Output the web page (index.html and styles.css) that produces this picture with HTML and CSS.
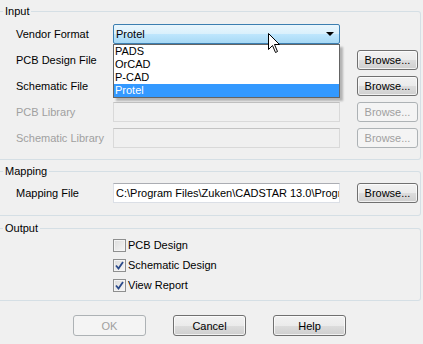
FILE: index.html
```html
<!DOCTYPE html>
<html>
<head>
	<meta charset="utf-8">
	<title>Import Settings</title>
	<link rel="stylesheet" href="styles.css">
</head>
<body>
	<div class="dialog">
		<fieldset class="group group-input">
			<legend>Input</legend>
			<div class="rows">
				<div class="row">
					<label>Vendor Format</label>
					<div class="combo">
						<span class="combo-text">Protel</span>
						<span class="combo-arrow"></span>
						<!-- open drop-down list -->
						<ul class="droplist">
							<li>PADS</li>
							<li>OrCAD</li>
							<li>P-CAD</li>
							<li class="selected">Protel</li>
						</ul>
					</div>
				</div>
				<div class="row">
					<label>PCB Design File</label>
					<div class="field"></div>
					<button type="button" class="btn">Browse...</button>
				</div>
				<div class="row">
					<label>Schematic File</label>
					<div class="field"></div>
					<button type="button" class="btn">Browse...</button>
				</div>
				<div class="row disabled">
					<label>PCB Library</label>
					<div class="field"></div>
					<button type="button" class="btn" disabled>Browse...</button>
				</div>
				<div class="row disabled">
					<label>Schematic Library</label>
					<div class="field"></div>
					<button type="button" class="btn" disabled>Browse...</button>
				</div>
			</div>
		</fieldset>

		<fieldset class="group group-mapping">
			<legend>Mapping</legend>
			<div class="rows">
				<div class="row">
					<label>Mapping File</label>
					<div class="field">C:\Program Files\Zuken\CADSTAR 13.0\Programs\Translators</div>
					<button type="button" class="btn">Browse...</button>
				</div>
			</div>
		</fieldset>

		<fieldset class="group group-output">
			<legend>Output</legend>
			<div class="checks">
				<div class="check-row"><span class="check"></span>PCB Design</div>
				<div class="check-row"><span class="check checked"><svg width="9" height="9" viewBox="0 0 9 9"><path d="M1 4.5 L3.5 7.5 L8 1" fill="none" stroke="#2b4a8a" stroke-width="1.8"/></svg></span>Schematic Design</div>
				<div class="check-row"><span class="check checked"><svg width="9" height="9" viewBox="0 0 9 9"><path d="M1 4.5 L3.5 7.5 L8 1" fill="none" stroke="#2b4a8a" stroke-width="1.8"/></svg></span>View Report</div>
			</div>
		</fieldset>

		<div class="buttons">
			<button type="button" class="btn" disabled>OK</button>
			<button type="button" class="btn">Cancel</button>
			<button type="button" class="btn">Help</button>
		</div>

		<!-- mouse pointer -->
		<svg class="cursor" width="13" height="21" viewBox="0 0 13 21">
			<path d="M0.5 0.5 L0.5 16.5 L4.5 12.5 L7.5 19.5 L9.5 18.5 L6.5 11.5 L11.5 11.5 Z" fill="#fff" stroke="#000" stroke-width="1"/>
		</svg>
	</div>
</body>
</html>
```

FILE: styles.css
```css
body {
	margin: 0;
	padding: 0;
	background-color: #f0f0f0;
	font-family: "Liberation Sans", Arial, sans-serif;
	font-size: 11px;
	color: #000;
}

.dialog {
	position: relative;
	width: 423px;
	height: 344px;
	padding-top: 5px;
	box-sizing: border-box;
}

.group {
	margin: 0 2px 0 0;
	padding: 0;
	border: 1px solid #d5dfe5;
	border-left: none;
	border-radius: 0 3px 3px 0;
	min-width: 0;
}

.group legend {
	margin-left: 3px;
	padding: 0 2px;
	line-height: 13px;
}

.group-mapping {
	margin-top: 5px;
}

.group-output {
	margin-top: 6px;
}

.group-input .rows {
	padding: 6px 0 11px 16px;
}

.group-mapping .rows {
	padding: 5px 0 12px 16px;
}

.rows {
	display: flex;
	flex-direction: column;
	gap: 6px;
}

.row {
	display: grid;
	grid-template-columns: 97px 227px 78px;
	align-items: center;
	height: 20px;
}

.row .btn {
	justify-self: end;
	width: 61px;
}

.row.disabled label {
	color: #a0a0a0;
}

.field {
	height: 20px;
	box-sizing: border-box;
	background-color: #fff;
	border: 1px solid #dbdfe6;
	border-top-color: #abadb3;
	padding: 0 2px;
	line-height: 18px;
	white-space: nowrap;
	overflow: hidden;
}

.row.disabled .field {
	background-color: #f0f0f0;
	border-color: #d9d9d9;
	border-top-color: #c3c3c3;
}

/* combo box (hover) */
.combo {
	position: relative;
	height: 20px;
	box-sizing: border-box;
	border: 1px solid #3c7fb1;
	border-radius: 2px;
	background: linear-gradient(to bottom, #eaf6fd 0%, #d9f0fc 50%, #bee6fd 51%, #a7d9f5 100%);
	line-height: 18px;
	padding-left: 2px;
}

.combo-arrow {
	position: absolute;
	right: 5px;
	top: 7px;
	width: 0;
	height: 0;
	border-left: 4px solid transparent;
	border-right: 4px solid transparent;
	border-top: 4px solid #000;
}

.droplist {
	position: absolute;
	left: -1px;
	top: 19px;
	width: 227px;
	margin: 0;
	padding: 0;
	list-style: none;
	box-sizing: border-box;
	background-color: #fff;
	border: 1px solid #646464;
	box-shadow: 3px 3px 2px rgba(0, 0, 0, 0.25);
	z-index: 2;
}

.droplist li {
	height: 13px;
	line-height: 13px;
	padding-left: 1px;
}

.droplist li.selected {
	background-color: #3399ff;
	color: #fff;
}

/* buttons */
.btn {
	font-family: inherit;
	font-size: 11px;
	height: 20px;
	padding: 0;
	border: 1px solid #707070;
	border-radius: 3px;
	background: linear-gradient(to bottom, #f2f2f2 0%, #ebebeb 50%, #dddddd 51%, #cfcfcf 100%);
	box-shadow: inset 0 0 0 1px rgba(255, 255, 255, 0.7);
	color: #000;
}

.btn:disabled {
	border-color: #adb2b5;
	background: #f4f4f4;
	box-shadow: none;
	color: #a0a0a0;
}

/* output check boxes */
.checks {
	padding: 0 0 5px 113px;
}

.check-row {
	display: flex;
	align-items: center;
	gap: 2px;
	height: 20px;
}

.check {
	display: flex;
	align-items: center;
	justify-content: center;
	width: 13px;
	height: 13px;
	box-sizing: border-box;
	border: 1px solid #8e8f8f;
	background: linear-gradient(135deg, #dcdcdc 0%, #f6f6f6 100%);
	box-shadow: inset 0 0 0 1px #f4f4f4;
}

.buttons {
	display: flex;
	gap: 27px;
	padding-left: 73px;
	margin-top: 14px;
}

.buttons .btn {
	width: 73px;
	height: 21px;
}

.cursor {
	position: absolute;
	left: 268px;
	top: 33px;
	z-index: 3;
}
```
